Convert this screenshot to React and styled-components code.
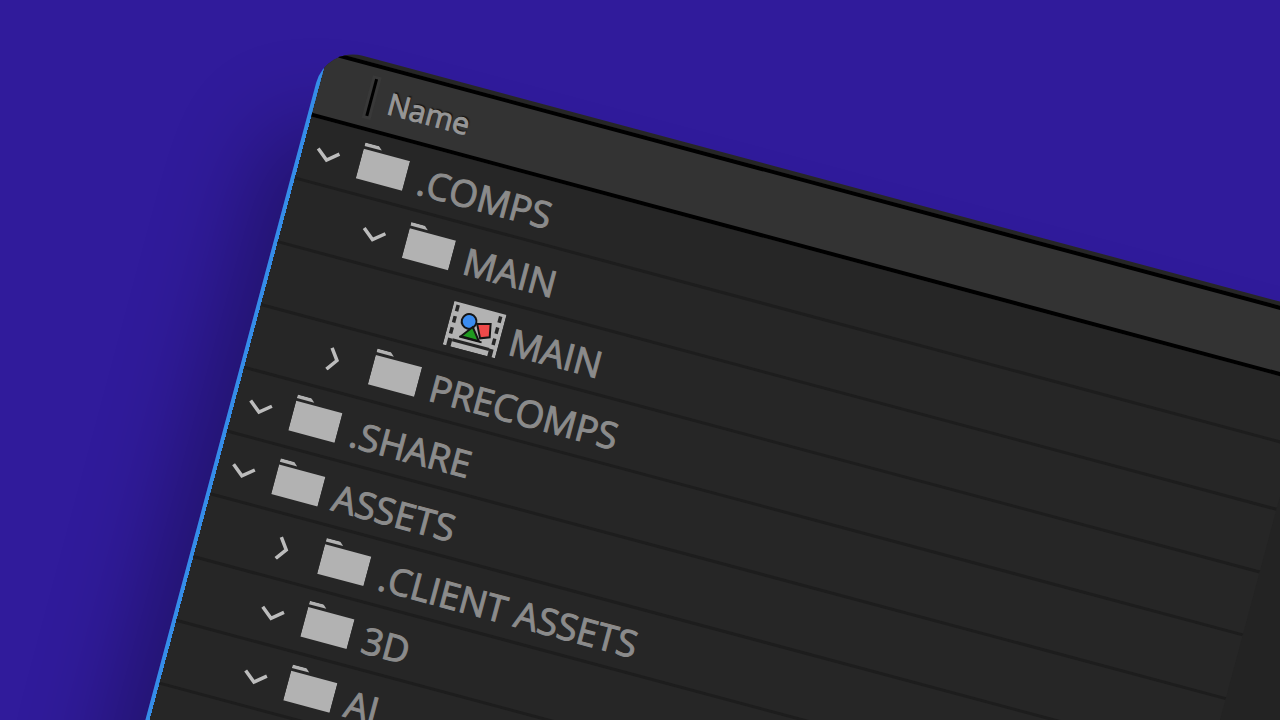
import React, { useState } from "react"
import styled, { createGlobalStyle } from "styled-components"

const colors = {
	backdrop: "#301b9b",
	panel: "#262626",
	header: "#333333",
	gutter: "#232323",
	line: "#1d1d1d",
	accent: "#358de8",
	icon: "#b2b2b2",
	text: "#8b8b8b",
}

const items = [
	{ id: 1, name: ".COMPS", depth: 0, kind: "folder", open: true },
	{ id: 2, name: "MAIN", depth: 1, kind: "folder", open: true },
	{ id: 3, name: "MAIN", depth: 2, kind: "comp" },
	{ id: 4, name: "PRECOMPS", depth: 1, kind: "folder", open: false },
	{ id: 5, name: ".SHARE", depth: 0, kind: "folder", open: true },
	{ id: 6, name: "ASSETS", depth: 0, kind: "folder", open: true },
	{ id: 7, name: ".CLIENT ASSETS", depth: 1, kind: "folder", open: false },
	{ id: 8, name: "3D", depth: 1, kind: "folder", open: true },
	{ id: 9, name: "AI", depth: 1, kind: "folder", open: true },
]

const FolderIcon = () => (
	<svg width="48" height="40" viewBox="0 0 48 40" fill={colors.icon} aria-hidden="true">
		<path d="M0 0H14L18 3.6H0Z" />
		<path d="M0 6.5H48V37H0Z" />
	</svg>
)

const CompIcon = () => (
	<svg width="54" height="48" viewBox="0 -3 54 48" aria-hidden="true">
		<path fill={colors.icon} d="M0 0H54V45H50.5V37H46V45H8V37H3.5V45H0Z" />
		<g fill={colors.panel}>
			<rect x="3" y="3" width="3.5" height="6.5" />
			<rect x="3" y="14.5" width="3.5" height="6.5" />
			<rect x="3" y="26" width="3.5" height="6.5" />
			<rect x="47" y="3" width="3.5" height="6.5" />
			<rect x="47" y="14.5" width="3.5" height="6.5" />
			<rect x="47" y="26" width="3.5" height="6.5" />
			<rect x="8" y="36.5" width="38" height="3" />
		</g>
		<g stroke="#141414" strokeWidth="2">
			<circle cx="19.5" cy="16" r="7.4" fill="#3b8cf0" />
			<path d="M28 16.5L41 13L43.5 26L34.5 29.5Z" fill="#f04a4a" />
			<path d="M24.5 20.5L34 32.5H15.5Z" fill="#1f9a1f" />
			<path d="M14 33H37" />
		</g>
	</svg>
)

const Chevron = ({ open }) => (
	<svg width="28" height="28" viewBox="0 0 28 28" fill="none" stroke="#bcbcbc" strokeWidth="3.5" aria-hidden="true">
		<path d={open ? "M3 12L14 21L25 12" : "M3 5L11 16L3 27"} />
	</svg>
)

const TreeRow = ({ item }) => {
	const [open, setOpen] = useState(item.open)

	return (
		<Row depth={item.depth}>
			<TwirlSlot>
				{item.kind === "folder" && (
					<Twirl type="button" aria-label={`Toggle ${item.name}`} aria-expanded={open} onClick={() => setOpen(!open)}>
						<Chevron open={open} />
					</Twirl>
				)}
			</TwirlSlot>
			<IconSlot>{item.kind === "folder" ? <FolderIcon /> : <CompIcon />}</IconSlot>
			<Name>{item.name}</Name>
		</Row>
	)
}

const App = () => (
	<React.Fragment>
		<GlobalStyle />
		<Stage>
			<Panel>
				<Header>
					<Divider />
					<HeaderLabel>Name</HeaderLabel>
				</Header>
				<Body>
					<List>
						{items.map(item => <TreeRow key={item.id} item={item} />)}
					</List>
					<Gutter />
				</Body>
			</Panel>
		</Stage>
	</React.Fragment>
)

const GlobalStyle = createGlobalStyle`
	* {
		box-sizing: border-box;
	}
	body {
		margin: 0;
		background: ${colors.backdrop};
		font-family: "Open Sans", "Noto Sans", sans-serif;
	}
`

const Stage = styled.main`
	height: 100vh;
	padding: 46px 0 0 326px;
	overflow: hidden;
	background: ${colors.backdrop};
`

const Panel = styled.section`
	display: flex;
	flex-direction: column;
	width: 90vw;
	min-height: 100vh;
	padding: 4px 0 0 4px;
	overflow: hidden;
	border-radius: 38px 0 0 0;
	background: linear-gradient(to right, ${colors.accent} 4px, ${colors.panel} 4px);
	box-shadow: -30px 80px 90px rgba(0, 0, 0, 0.3);
	transform: rotate(15deg);
	transform-origin: 0 0;
`

const Header = styled.header`
	display: flex;
	align-items: center;
	height: 68px;
	padding-left: 52px;
	border-top: 4px solid #000;
	border-bottom: 4px solid #000;
	background: ${colors.header};
`

const Divider = styled.span`
	width: 3px;
	height: 38px;
	background: #000;
	box-shadow: 0 0 0 3px #393939;
`

const HeaderLabel = styled.span`
	padding: 2px 0 0 16px;
	color: #969696;
	font-size: 30px;
	line-height: 40px;
	text-shadow: 1px -2px 1px #161616;
	-webkit-text-stroke: 1px #969696;
`

const Body = styled.div`
	display: flex;
	flex: 1;
`

const List = styled.ul`
	display: grid;
	flex: 1;
	grid-template-rows: repeat(9, 1fr);
	height: 588px;
	margin: 0;
	padding: 0;
	list-style: none;
`

const Row = styled.li.withConfig({ shouldForwardProp: prop => prop !== "depth" })`
	display: flex;
	align-items: center;
	padding-left: ${props => 12 + props.depth * 65}px;
	border-bottom: 3px solid ${colors.line};
`

const TwirlSlot = styled.span`
	width: 28px;
	margin-right: 16px;
`

const Twirl = styled.button`
	display: block;
	padding: 0;
	border: 0;
	background: none;
	cursor: pointer;

	svg {
		display: block;
	}
`

const IconSlot = styled.span`
	display: flex;
	justify-content: center;
	width: 54px;
`

const Name = styled.span`
	padding: 6px 0 0 10px;
	color: ${colors.text};
	font-size: 37px;
	line-height: 52px;
	white-space: nowrap;
	-webkit-text-stroke: 1px ${colors.text};
`

const Gutter = styled.div`
	width: 114px;
	background: ${colors.gutter};
`

export default App
